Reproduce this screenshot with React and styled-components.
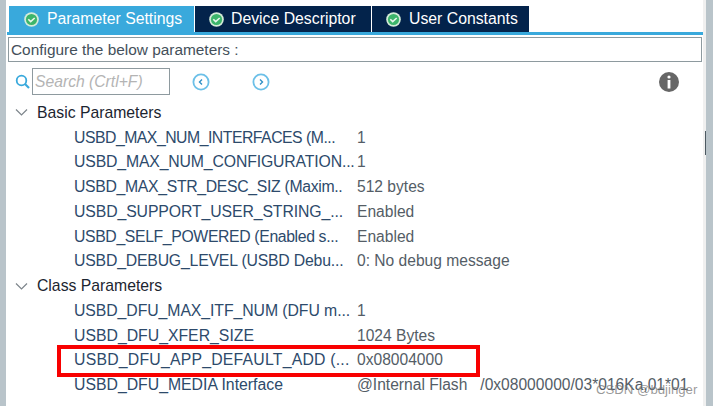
import React from "react";
import styled, { createGlobalStyle } from "styled-components";

const GlobalStyle = createGlobalStyle`
  html, body {
    margin: 0;
    padding: 0;
    background: #fff;
  }
`;

const Page = styled.div`
  position: relative;
  width: 713px;
  height: 406px;
  overflow: hidden;
  display: flex;
  font-family: "Liberation Sans", Arial, sans-serif;
  background: #fff;
`;

const LeftEdge = styled.div`
  width: 6px;
  flex: none;
  background: #b9c4ca;
`;

const RightEdge = styled.div`
  position: relative;
  width: 10px;
  flex: none;
  background: linear-gradient(to right, #f0f0f0 3px, #b9c4ca 3px);
`;

const ScrollThumb = styled.div`
  position: absolute;
  left: 2px;
  top: 131px;
  width: 1px;
  height: 24px;
  background: #4d5a62;
`;

const Main = styled.div`
  flex: 1;
  min-width: 0;
  padding-top: 6px;
`;

const TabBar = styled.div`
  display: flex;
  height: 26px;
  border-bottom: 3px solid #39a9dc;
  margin: 0 0 2px 1px;
  padding-left: 2px;
`;

const Tab = styled.div`
  display: flex;
  align-items: center;
  gap: ${(p) => p.$gap}px;
  height: 26px;
  width: ${(p) => p.$width}px;
  padding-left: ${(p) => p.$pad}px;
  box-sizing: border-box;
  margin-right: 1px;
  background: ${(p) => (p.$active ? "#39a9dc" : "#03234b")};
  color: #fff;
  font-size: 15.8px;
  white-space: nowrap;
`;

const ConfigBox = styled.div`
  height: 25px;
  width: 694px;
  margin-left: 2px;
  border: 1px solid #8e9a9f;
  display: flex;
  align-items: center;
  padding-left: 2px;
  box-sizing: border-box;
  font-size: 15.4px;
  color: #44505a;
`;

const SearchRow = styled.div`
  display: flex;
  align-items: center;
  height: 33px;
  margin-top: 3px;
  padding-left: 9px;
`;

const SearchBox = styled.div`
  width: 138px;
  height: 27px;
  margin-left: 2px;
  box-sizing: border-box;
  border: 1px solid #8e9a9f;
  display: flex;
  align-items: center;
  padding-left: 2px;
  font-size: 15.7px;
  font-style: italic;
  color: #b4b4b4;
`;

const NavIcon = styled.svg`
  margin-left: ${(p) => p.$gap}px;
  flex: none;
`;

const InfoIcon = styled.svg`
  margin-left: auto;
  margin-right: 24px;
  flex: none;
`;

const Tree = styled.div`
  margin-top: 2.4px;
`;

const GroupRow = styled.div`
  display: flex;
  align-items: center;
  height: 24.75px;
  padding-left: 9px;
  font-size: 15.75px;
  color: #1c2530;
  gap: 9px;
`;

const ParamRow = styled.div`
  display: flex;
  align-items: center;
  height: 24.75px;
  font-size: 15.8px;
  color: #2d4a6b;
  padding-left: 68px;
  white-space: nowrap;
`;

const ParamName = styled.span`
  width: 283px;
  flex: none;
  letter-spacing: ${(p) => p.$track}px;
`;

const ParamValue = styled.span`
  font-size: 15.6px;
  color: #545d66;
  white-space: pre;
`;

const Highlight = styled.div`
  position: absolute;
  left: 57px;
  top: 345px;
  width: 423px;
  height: 32px;
  box-sizing: border-box;
  border: 4px solid #f80000;
  pointer-events: none;
`;

const Watermark = styled.div`
  position: absolute;
  left: 596px;
  top: 382px;
  font-size: 13.2px;
  color: rgba(120, 120, 120, 0.75);
  white-space: nowrap;
`;

const CheckIcon = () => (
  <svg width="15" height="15" viewBox="0 0 15 15">
    <circle cx="7.5" cy="7.5" r="7.3" fill="#d5ecd9" />
    <circle cx="7.5" cy="7.5" r="5.6" fill="#3cb56b" />
    <path d="M4.3 7.2l2.4 2.4 4-3.6" fill="none" stroke="#e9f7ec" strokeWidth="1.6" />
  </svg>
);

const SearchIcon = () => (
  <svg width="15" height="15" viewBox="0 0 15 15">
    <circle cx="6.5" cy="6.5" r="4.8" fill="none" stroke="#39a9dc" strokeWidth="1.8" />
    <path d="M10 10l4 4" stroke="#39a9dc" strokeWidth="2.2" />
  </svg>
);

const Chevron = () => (
  <svg width="13" height="9" viewBox="0 0 13 9">
    <path d="M1 1.5l5.5 5.5 5.5-5.5" fill="none" stroke="#7d858b" strokeWidth="1.2" />
  </svg>
);

const NavButton = ({ gap, dir }) => (
  <NavIcon $gap={gap} width="18" height="18" viewBox="0 0 18 18">
    <circle cx="9" cy="9" r="7.6" fill="none" stroke="#6cc0e8" strokeWidth="1.8" />
    <path
      d={dir === "left" ? "M10 6.5l-2.5 2.5 2.5 2.5" : "M8 6.5l2.5 2.5-2.5 2.5"}
      fill="none"
      stroke="#2f8fc4"
      strokeWidth="1.4"
    />
  </NavIcon>
);

const basic = [
  ["USBD_MAX_NUM_INTERFACES (M...", "1", -0.5],
  ["USBD_MAX_NUM_CONFIGURATION...", "1", -0.15],
  ["USBD_MAX_STR_DESC_SIZ (Maxim..", "512 bytes", -0.33],
  ["USBD_SUPPORT_USER_STRING_...", "Enabled", -0.1],
  ["USBD_SELF_POWERED (Enabled s...", "Enabled", -0.37],
  ["USBD_DEBUG_LEVEL (USBD Debu...", "0: No debug message", -0.19],
];

const classParams = [
  ["USBD_DFU_MAX_ITF_NUM (DFU m...", "1", -0.07],
  ["USBD_DFU_XFER_SIZE", "1024 Bytes", 0],
  ["USBD_DFU_APP_DEFAULT_ADD (...", "0x08004000", 0.22],
  ["USBD_DFU_MEDIA Interface", "@Internal Flash   /0x08000000/03*016Ka,01*01", 0],
];

const Group = ({ title, rows }) => (
  <>
    <GroupRow>
      <Chevron />
      {title}
    </GroupRow>
    {rows.map(([name, value, track]) => (
      <ParamRow key={name}>
        <ParamName $track={track}>{name}</ParamName>
        <ParamValue>{value}</ParamValue>
      </ParamRow>
    ))}
  </>
);

export default function App() {
  return (
    <Page>
      <GlobalStyle />
      <LeftEdge />
      <Main>
        <TabBar>
          <Tab $active $width={185} $pad={15} $gap={8}>
            <CheckIcon />
            Parameter Settings
          </Tab>
          <Tab $width={176} $pad={14} $gap={7}>
            <CheckIcon />
            Device Descriptor
          </Tab>
          <Tab $width={157} $pad={14} $gap={8}>
            <CheckIcon />
            User Constants
          </Tab>
        </TabBar>
        <ConfigBox>Configure the below parameters :</ConfigBox>
        <SearchRow>
          <SearchIcon />
          <SearchBox>Search (Crtl+F)</SearchBox>
          <NavButton gap={22} dir="left" />
          <NavButton gap={42} dir="right" />
          <InfoIcon width="20" height="20" viewBox="0 0 20 20">
            <circle cx="10" cy="10" r="10" fill="#666" />
            <circle cx="10" cy="5" r="1.6" fill="#fff" />
            <rect x="8.6" y="8" width="2.8" height="8.5" fill="#fff" />
          </InfoIcon>
        </SearchRow>
        <Tree>
          <Group title="Basic Parameters" rows={basic} />
          <Group title="Class Parameters" rows={classParams} />
        </Tree>
      </Main>
      <RightEdge>
        <ScrollThumb />
      </RightEdge>
      <Highlight />
      <Watermark>CSDN @bdjinger</Watermark>
    </Page>
  );
}
